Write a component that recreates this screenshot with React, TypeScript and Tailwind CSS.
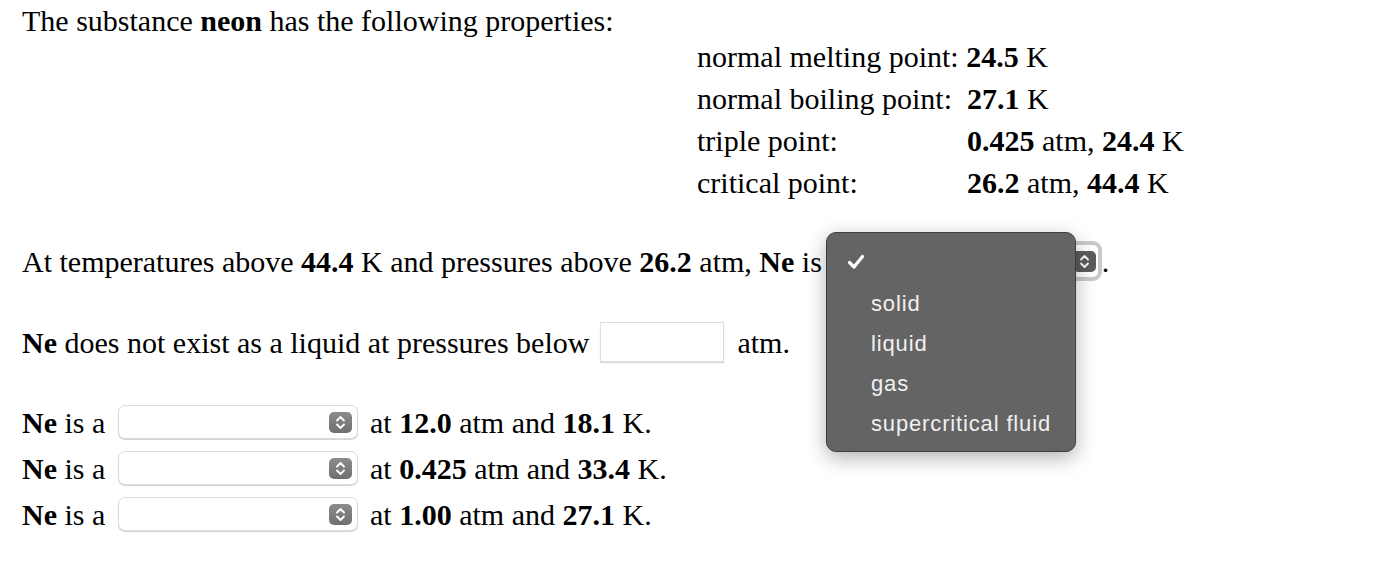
import React from 'react';

const serif = { fontFamily: '"Liberation Serif", "Times New Roman", serif' };

function Stepper({ dark = false }: { dark?: boolean }) {
  return (
    <span
      className={`flex h-[21px] w-[23px] items-center justify-center rounded-[5px] ${
        dark ? 'bg-[#5c5c5c]' : 'bg-gradient-to-b from-[#8c8c8c] to-[#6f6f6f]'
      }`}
    >
      <svg width="11" height="15" viewBox="0 0 11 15" fill="none">
        <path d="M2 5.5 L5.5 2 L9 5.5" stroke="white" strokeWidth="1.8" strokeLinecap="round" strokeLinejoin="round" />
        <path d="M2 9.5 L5.5 13 L9 9.5" stroke="white" strokeWidth="1.8" strokeLinecap="round" strokeLinejoin="round" />
      </svg>
    </span>
  );
}

function Select() {
  return (
    <span className="inline-flex h-[34px] w-[240px] items-center justify-end rounded-[7px] border border-[#dcdcdc] bg-white pr-[5px] shadow-[0_1px_1px_rgba(0,0,0,0.18)]">
      <Stepper />
    </span>
  );
}

const options = ['solid', 'liquid', 'gas', 'supercritical fluid'];

export default function App() {
  return (
    <div className="relative min-h-[563px] bg-white px-[22px] text-[30px] text-black" style={serif}>
      <div className="flex h-[40px] items-center">
        <span>
          The substance <b>neon</b> has the following properties:
        </span>
      </div>

      <div className="-mt-[5px] ml-[675px]">
        <div className="flex h-[42px] items-center">
          normal melting point:&nbsp;<b>24.5</b>&nbsp;K
        </div>
        <div className="flex h-[42px] items-center">
          <span className="w-[270px]">normal boiling point:</span>
          <span>
            <b>27.1</b> K
          </span>
        </div>
        <div className="flex h-[42px] items-center">
          <span className="w-[270px]">triple point:</span>
          <span>
            <b>0.425</b> atm, <b>24.4</b> K
          </span>
        </div>
        <div className="flex h-[42px] items-center">
          <span className="w-[270px]">critical point:</span>
          <span>
            <b>26.2</b> atm, <b>44.4</b> K
          </span>
        </div>
      </div>

      <div className="mt-[38px] flex h-[40px] items-center">
        <span>
          At temperatures above <b>44.4</b> K and pressures above <b>26.2</b> atm, <b>Ne</b> is
        </span>
        <span className="ml-[8px] inline-flex h-[40px] w-[272px] items-center justify-end rounded-[9px] border-[4px] border-[#c9c9c9] bg-white pr-[2px]">
          <Stepper dark />
        </span>
        <span>.</span>
      </div>

      <div className="mt-[41px] flex h-[40px] items-center">
        <span>
          <b>Ne</b> does not exist as a liquid at pressures below
        </span>
        <span className="ml-[11px] mr-[13px] h-[40px] w-[124px] border border-[#dedede] bg-white shadow-[0_1px_1px_rgba(0,0,0,0.15)]" />
        <span>atm.</span>
      </div>

      <div className="mt-[37px]">
        {[
          ['12.0', '18.1'],
          ['0.425', '33.4'],
          ['1.00', '27.1'],
        ].map(([p, t], i) => (
          <div key={i} className="flex h-[46px] items-center">
            <span className="w-[96px]">
              <b>Ne</b> is a
            </span>
            <Select />
            <span className="ml-[12px]">
              at <b>{p}</b> atm and <b>{t}</b> K.
            </span>
          </div>
        ))}
      </div>

      {/* open dropdown menu */}
      <div
        className="absolute left-[826px] top-[232px] h-[220px] w-[250px] rounded-[10px] border border-[#3e3e3e] bg-[#646464] text-[22px] tracking-[0.85px] text-[#f0f0f0] shadow-[0_6px_20px_rgba(0,0,0,0.3)]"
        style={{ fontFamily: '"Liberation Sans", Arial, sans-serif' }}
      >
        <div className="flex h-[40px] items-center pl-[20px] pt-[18px]">
          <svg width="18" height="16" viewBox="0 0 18 16" fill="none">
            <path d="M2.5 8.5 L7 13 L15.5 2.5" stroke="white" strokeWidth="3.2" strokeLinecap="round" strokeLinejoin="round" />
          </svg>
        </div>
        <div className="pt-[10px]">
          {options.map((o) => (
            <div key={o} className="flex h-[40px] items-center pl-[44px]">
              {o}
            </div>
          ))}
        </div>
      </div>
    </div>
  );
}
